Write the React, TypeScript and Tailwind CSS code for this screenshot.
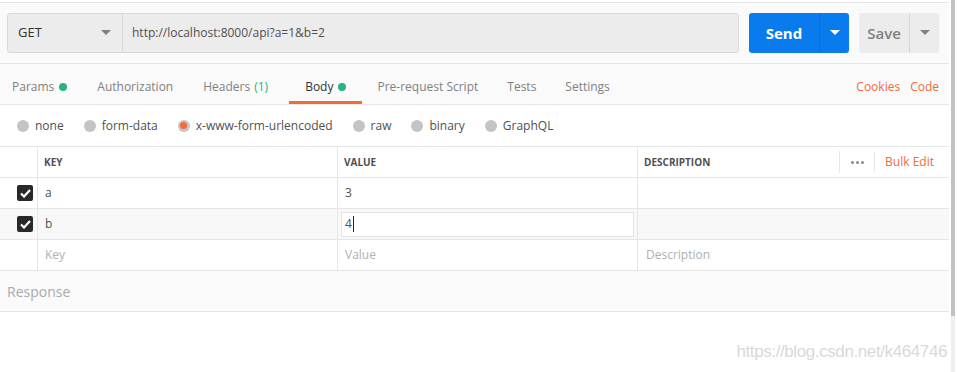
import React from "react";

const font = { fontFamily: '"Open Sans", "Noto Sans", sans-serif' };

function Caret({ color = "#808080" }: { color?: string }) {
  return (
    <svg width="10" height="6" viewBox="0 0 10 6">
      <path d="M0 0 L10 0 L5 5 Z" fill={color} />
    </svg>
  );
}

function Dot() {
  return <span className="inline-block w-[8px] h-[8px] rounded-full bg-[#26b47f] ml-[5px]" />;
}

function Radio({ label, active }: { label: string; active?: boolean }) {
  return (
    <div className="flex items-center">
      {active ? (
        <span className="w-[12px] h-[12px] rounded-full bg-[#c4c4c4] flex items-center justify-center">
          <span className="w-[7px] h-[7px] rounded-full bg-[#f26b3a]" />
        </span>
      ) : (
        <span className="w-[12px] h-[12px] rounded-full bg-[#c4c4c4]" />
      )}
      <span className="ml-[6px] text-[12px] text-[#505050]">{label}</span>
    </div>
  );
}

function Check() {
  return (
    <span className="w-[16px] h-[16px] rounded-[2px] bg-[#282828] flex items-center justify-center">
      <svg width="11" height="9" viewBox="0 0 11 9">
        <path d="M1 4.5 L4 7.5 L10 1" stroke="#fff" strokeWidth="2.2" fill="none" />
      </svg>
    </span>
  );
}

export default function App() {
  return (
    <div className="w-[957px] h-[372px] bg-white flex overflow-hidden" style={font}>
      <div className="w-[949px] flex flex-col">
        {/* Header */}
        <div className="bg-[#fafafa]">
          <div className="h-[2px] bg-white" />
          <div className="border-t border-[#e6e6e6] h-[61px] flex items-start pt-[10px] pl-[7px]">
            <div className="flex h-[40px] w-[732px] rounded-[3px] border border-[#d9d9d9] bg-[#ececec]">
              <div className="w-[115px] flex items-center justify-between pl-[10px] pr-[11px] border-r border-[#d9d9d9]">
                <span className="text-[13px] text-[#333]">GET</span>
                <Caret />
              </div>
              <div className="flex-1 flex items-center pl-[9px] text-[12px] text-[#505050]">
                http://localhost:8000/api?a=1&amp;b=2
              </div>
            </div>
            <div className="ml-[10px] flex h-[40px] w-[100px] rounded-[3px] bg-[#097bed]">
              <div className="w-[70px] flex items-center justify-center text-[15px] font-bold text-white">Send</div>
              <div className="flex-1 flex items-center justify-center border-l border-[#0a6ed6]">
                <Caret color="#ffffff" />
              </div>
            </div>
            <div className="ml-[10px] flex h-[40px] w-[80px] rounded-[3px] bg-[#ececec]">
              <div className="w-[50px] flex items-center justify-center text-[15px] text-[#808080] font-semibold">Save</div>
              <div className="flex-1 flex items-center justify-center border-l border-[#d6d6d6]">
                <Caret />
              </div>
            </div>
          </div>
          {/* Tabs */}
          <div className="border-t border-[#e6e6e6] h-[41px] flex items-stretch text-[12px] text-[#808080]">
            <div className="flex items-center pt-[8px] pb-[3px] pl-[12px] pr-[14px]">Params<Dot /></div>
            <div className="flex items-center pt-[8px] pb-[3px] px-[16px]">Authorization</div>
            <div className="flex items-center pt-[8px] pb-[3px] px-[14px]">Headers <span className="ml-[4px] text-[#26b47f]">(1)</span></div>
            <div className="flex items-center pt-[8px] px-[16px] border-b-[3px] border-[#f26b3a] text-[#333] ml-[7px]">Body<Dot /></div>
            <div className="flex items-center pt-[8px] pb-[3px] px-[15px]">Pre-request Script</div>
            <div className="flex items-center pt-[8px] pb-[3px] pl-[14px] pr-[15px]">Tests</div>
            <div className="flex items-center pt-[8px] pb-[3px] px-[14px]">Settings</div>
            <div className="flex-1" />
            <div className="flex items-center pt-[8px] pb-[3px] text-[#f26b3a] pr-[10px]">Cookies</div>
            <div className="flex items-center pt-[8px] pb-[3px] text-[#f26b3a] pr-[10px]">Code</div>
          </div>
        </div>
        {/* Radios */}
        <div className="border-t border-[#e6e6e6] h-[42px] flex items-center pl-[17px] gap-[20px]">
          <Radio label="none" />
          <Radio label="form-data" />
          <Radio label="x-www-form-urlencoded" active />
          <Radio label="raw" />
          <Radio label="binary" />
          <Radio label="GraphQL" />
        </div>
        {/* Table */}
        <div className="border-t border-[#e6e6e6] text-[12px] text-[#505050]">
          <div className="grid grid-cols-[38px_300px_300px_1fr] h-[31px] border-b border-[#e6e6e6]">
            <div className="border-r border-[#e6e6e6]" />
            <div className="border-r border-[#e6e6e6] flex items-center pl-[6px] text-[10px] font-bold text-[#505050]">KEY</div>
            <div className="border-r border-[#e6e6e6] flex items-center pl-[6px] text-[10px] font-bold text-[#505050]">VALUE</div>
            <div className="flex items-center pl-[6px] text-[10px] font-bold text-[#505050]">
              <span className="flex-1">DESCRIPTION</span>
              <span className="h-[22px] border-l border-[#e6e6e6] w-[35px] flex items-center justify-center gap-[2px]">
                <span className="w-[3px] h-[3px] rounded-full bg-[#888]" />
                <span className="w-[3px] h-[3px] rounded-full bg-[#888]" />
                <span className="w-[3px] h-[3px] rounded-full bg-[#888]" />
              </span>
              <span className="h-[20px] border-l border-[#e6e6e6] flex items-center pl-[10px] pr-[15px] text-[12px] font-normal text-[#f26b3a]">Bulk Edit</span>
            </div>
          </div>
          <div className="grid grid-cols-[38px_300px_300px_1fr] h-[31px] border-b border-[#e6e6e6]">
            <div className="border-r border-[#e6e6e6] flex items-center pl-[17px]"><Check /></div>
            <div className="border-r border-[#e6e6e6] flex items-center pl-[7px]">a</div>
            <div className="border-r border-[#e6e6e6] flex items-center pl-[7px]">3</div>
            <div />
          </div>
          <div className="grid grid-cols-[38px_300px_300px_1fr] h-[31px] border-b border-[#e6e6e6] bg-[#f8f8f8]">
            <div className="border-r border-[#e6e6e6] flex items-center pl-[17px]"><Check /></div>
            <div className="border-r border-[#e6e6e6] flex items-center pl-[7px]">b</div>
            <div className="border-r border-[#e6e6e6] flex items-center px-[3px]">
              <div className="w-full h-[25px] bg-white border border-[#e3e3e3] flex items-center pl-[3px]">
                4<span className="w-[1px] h-[16px] bg-[#222] ml-[1px]" />
              </div>
            </div>
            <div />
          </div>
          <div className="grid grid-cols-[38px_300px_300px_1fr] h-[31px] border-b border-[#e6e6e6] text-[#b0b0b0]">
            <div className="border-r border-[#e6e6e6]" />
            <div className="border-r border-[#e6e6e6] flex items-center pl-[7px]">Key</div>
            <div className="border-r border-[#e6e6e6] flex items-center pl-[7px]">Value</div>
            <div className="flex items-center pl-[8px]">Description</div>
          </div>
        </div>
        {/* Response */}
        <div className="h-[41px] bg-[#fafafa] border-b border-[#e6e6e6] flex items-center pl-[7px] text-[14px] text-[#aaaaaa]">
          Response
        </div>
        <div className="flex-1 flex items-end justify-end pb-[8px] pr-[2px]">
          <span
            className="text-[17px] text-[#d9d9d9] tracking-[-0.4px]"
            style={{ fontFamily: '"Liberation Sans Narrow", "Liberation Sans", Arial, sans-serif' }}
          >
            https://blog.csdn.net/k464746
          </span>
        </div>
      </div>
      <div className="w-[8px] flex flex-col">
        <div className="h-[316px] w-[4px] ml-[2px] bg-[#c2c2c2]" />
        <div className="flex-1 w-[4px] ml-[2px] bg-[#efefef]" />
      </div>
    </div>
  );
}
